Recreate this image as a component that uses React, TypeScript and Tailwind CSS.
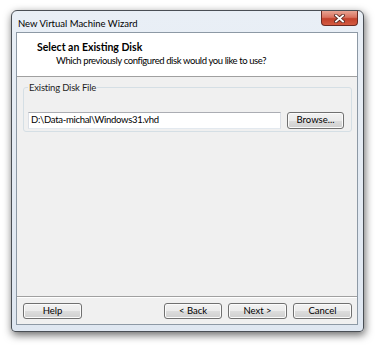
const btn =
  "h-[16px] rounded-[3px] border border-[#707070] bg-[linear-gradient(#f2f2f2_0%,#ebebeb_50%,#dddddd_50%,#cfcfcf_100%)] shadow-[inset_0_0_0_1px_#fbfbfb] flex items-center justify-center leading-none";

function CloseButton() {
  return (
    <div className="w-[37px] h-[15px] rounded-b-[4px] border border-t-0 border-[#6b2a22] bg-[linear-gradient(#e8a493_0%,#d9725f_45%,#c2412b_55%,#d45b41_100%)] flex items-center justify-center">
      <svg width="11" height="9" viewBox="0 0 11 9">
        <path d="M2 1.5 L9 7.5 M9 1.5 L2 7.5" stroke="#5a2a22" strokeWidth="3.6" strokeLinecap="square" />
        <path d="M2 1.5 L9 7.5 M9 1.5 L2 7.5" stroke="#ffffff" strokeWidth="1.8" strokeLinecap="square" />
      </svg>
    </div>
  );
}

export default function App() {
  return (
    <div className="w-[379px] h-[346px] bg-white pl-[11px] pt-[10px] font-['Lato',sans-serif] text-[9.5px] text-black">
      <div className="w-[353px] h-[322px] flex flex-col rounded-t-[6px] rounded-b-[4px] border border-[#4a4f55] bg-[linear-gradient(#e9eff6,#dfe7f1)] shadow-[1px_3px_9px_rgba(0,0,0,0.6)] pl-[4px] pr-[5px] pb-[6px]">
        {/* title bar */}
        <div className="h-[21px] flex items-start justify-between">
          <span className="pl-[2px] pt-[8px] leading-none">New Virtual Machine Wizard</span>
          <CloseButton />
        </div>

        {/* client area */}
        <div className="flex-1 flex flex-col border border-[#8d99a5] bg-[#f0f0f0]">
          <div className="h-[44px] bg-white border-b border-[#a0a0a0] pt-[9px]">
            <p className="pl-[20px] font-bold text-[10.5px] leading-none">Select an Existing Disk</p>
            <p className="pl-[39px] pt-[3px] leading-none tracking-[-0.4px]">Which previously configured disk would you like to use?</p>
          </div>

          <div className="pl-[6px] pr-[5px] pt-[6px]">
            <fieldset className="border border-[#d5dfe5] rounded-[3px] pl-[4px] pr-[7px] pb-[2px] pt-[19px]">
              <legend className="px-[1px] leading-none text-[#1e1e1e] tracking-[-0.2px]">Existing Disk File</legend>
              <div className="flex gap-[6px] items-center">
                <div className="flex-1 h-[17px] border border-[#abadb3] border-t-[#abadb3] border-x-[#dbdfe6] border-b-[#e3e9ef] bg-white px-[2px] flex items-center leading-none tracking-[-0.3px]">
                  {"D:\\Data-michal\\Windows31.vhd"}
                </div>
                <button className={btn + " w-[57px] h-[17px] border-[#3c7fb1]"}>Browse...</button>
              </div>
            </fieldset>
          </div>

          <div className="flex-1" />

          <div className="border-t border-[#a0a0a0] shadow-[inset_0_1px_0_#ffffff] pl-[6px] pr-[5px] pt-[6px] pb-[5px] flex items-center">
            <button className={btn + " w-[59px]"}>Help</button>
            <div className="flex-1" />
            <div className="flex gap-[6px]">
              <button className={btn + " w-[58px]"}>&lt; Back</button>
              <button className={btn + " w-[59px]"}>Next &gt;</button>
              <button className={btn + " w-[59px]"}>Cancel</button>
            </div>
          </div>
        </div>
      </div>
    </div>
  );
}
